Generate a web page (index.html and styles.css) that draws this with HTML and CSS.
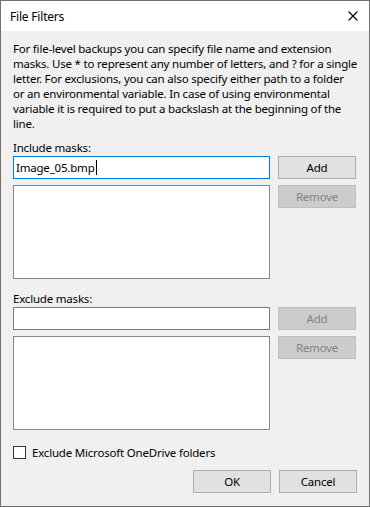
FILE: index.html
```html
<!DOCTYPE html>
<html>
<head>
<meta charset="utf-8">
<link rel="stylesheet" href="styles.css">
</head>
<body>
<div class="dialog">
  <div class="titlebar">
    <span class="title">File Filters</span>
    <svg class="close" width="10" height="10" viewBox="0 0 10 10"><path d="M0.5 0.5L9.5 9.5M9.5 0.5L0.5 9.5" stroke="#000" stroke-width="1.1" fill="none"/></svg>
  </div>
  <div class="content">
    <p class="intro">For file-level backups you can specify file name and extension<br>masks. Use * to represent any number of letters, and ? for a single<br>letter. For exclusions, you can also specify either path to a folder<br>or an environmental variable. In case of using environmental<br>variable it is required to put a backslash at the beginning of the<br>line.</p>

    <div class="label">Include masks:</div>
    <div class="grid">
      <div class="input focused">Image_05.bmp<span class="caret"></span></div>
      <div class="btn">Add</div>
      <div class="list"></div>
      <div class="btn disabled">Remove</div>
    </div>

    <div class="label label2">Exclude masks:</div>
    <div class="grid">
      <div class="input"></div>
      <div class="btn disabled">Add</div>
      <div class="list"></div>
      <div class="btn disabled">Remove</div>
    </div>

    <label class="check"><span class="box"></span>Exclude Microsoft OneDrive folders</label>

    <div class="footer">
      <div class="btn">OK</div>
      <div class="btn">Cancel</div>
    </div>
  </div>
</div>
</body>
</html>
```

FILE: styles.css
```css
* { box-sizing: border-box; }
html, body { margin: 0; padding: 0; }
body {
  font-family: "Noto Sans", "Open Sans", sans-serif;
  font-size: 11.5px;
  letter-spacing: -0.2px;
  color: #000;
  background: #f0f0f0;
}
.dialog {
  width: 370px;
  height: 507px;
  border: 1px solid #707070;
  background: #f0f0f0;
  display: flex;
  flex-direction: column;
}
.titlebar {
  height: 30px;
  background: #fff;
  display: flex;
  align-items: center;
  justify-content: space-between;
  padding: 0 11px 0 9px;
  flex-shrink: 0;
}
.title { font-size: 12px; line-height: 15px; }
.close { display: block; margin-top: -1px; }
.content {
  padding: 10px 12px 0 12px;
}
.intro {
  margin: 0;
  line-height: 15px;
  white-space: nowrap;
}
.label { line-height: 15px; margin-top: 9px; margin-bottom: 1px; }
.label2 { margin-top: 12px; }
.grid {
  display: grid;
  grid-template-columns: 257px 78px;
  column-gap: 8px;
  row-gap: 6px;
  align-items: start;
}
.input {
  height: 23px;
  background: #fff;
  border: 1px solid #7a7a7a;
  padding: 0 2px;
  line-height: 21px;
  display: flex;
  align-items: center;
}
.input.focused { border-color: #0078d7; }
.caret {
  display: inline-block;
  width: 1px;
  height: 15px;
  background: #000;
  margin-left: 1px;
}
.list {
  height: 94px;
  background: #fff;
  border: 1px solid #828790;
}
.btn {
  height: 23px;
  background: #e1e1e1;
  border: 1px solid #adadad;
  text-align: center;
  line-height: 21px;
}
.btn.disabled {
  background: #cccccc;
  border-color: #bfbfbf;
  color: #838383;
}
.check {
  display: flex;
  align-items: center;
  margin-top: 16px;
  line-height: 15px;
  height: 13px;
}
.box {
  width: 13px;
  height: 13px;
  border: 1px solid #333;
  background: #fff;
  margin-right: 6px;
  flex-shrink: 0;
}
.footer {
  display: flex;
  justify-content: flex-end;
  gap: 8px;
  margin-top: 11px;
}
.footer .btn { width: 78px; }
```
